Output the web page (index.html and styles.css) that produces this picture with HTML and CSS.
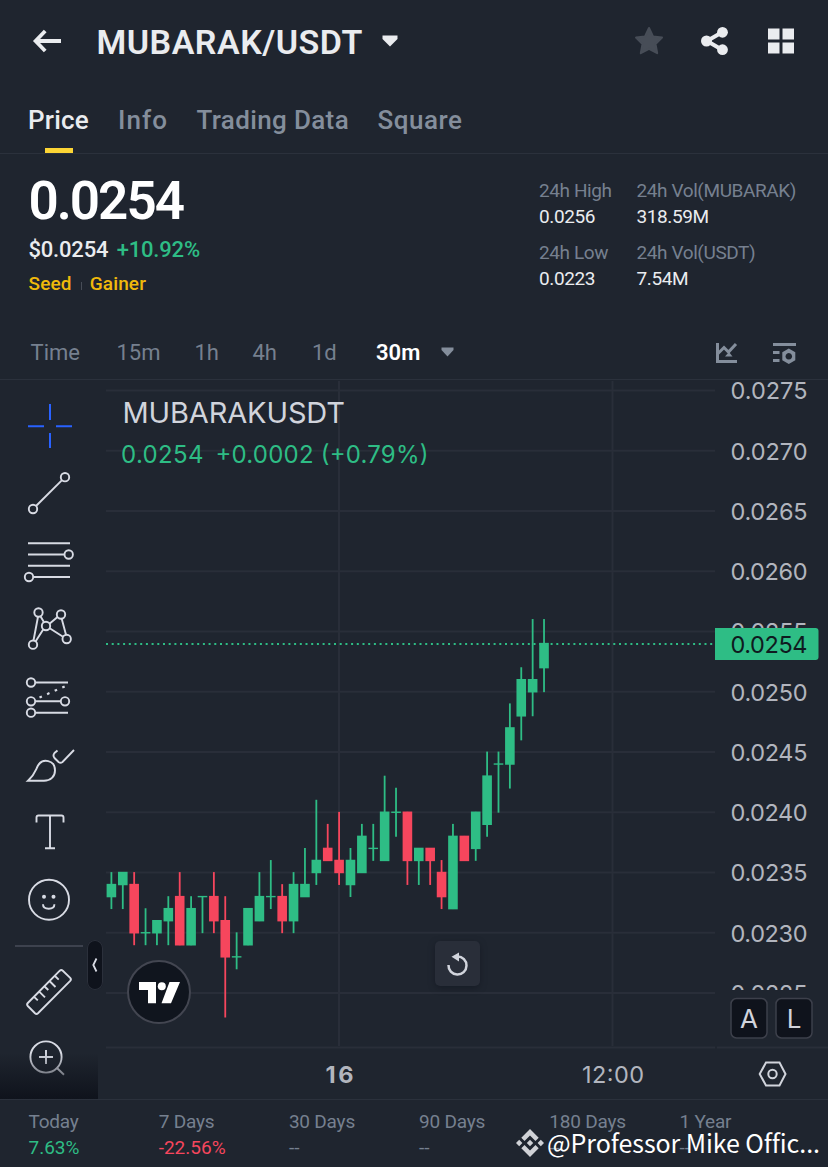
FILE: index.html
```html
<!DOCTYPE html>
<html lang="en">
<head>
<meta charset="utf-8">
<title>MUBARAK/USDT</title>
<link rel="stylesheet" href="styles.css">
</head>
<body>
<header class="header">
  <svg class="back" width="30" height="24" viewBox="0 0 30 24"><path d="M29 12H3M13.2 2L3.600 12l9.600 10" /></svg>
  <h1 class="title">MUBARAK/USDT</h1>
  <svg class="title-caret" width="16" height="12" viewBox="0 0 16 12"><path d="M0.500 0.500h15v3.500L8 11.500 0.500 4z"/></svg>
  <div class="actions">
    <svg width="30" height="30" viewBox="0 0 30 30"><path class="star" d="M15 2l4 8.400 9 1.200-6.500 6.400 1.700 9.200L15 22.800l-8.200 4.400 1.700-9.200L2 11.600l9-1.200z"/></svg>
    <svg width="30" height="30" viewBox="0 0 30 30"><path class="share-line" d="M22.500 6L7 15l15.500 9"/><g class="light"><circle cx="22.500" cy="6.300" r="5.400"/><circle cx="6.500" cy="15" r="5.500"/><circle cx="22.500" cy="23.700" r="5.400"/></g></svg>
    <svg width="30" height="30" viewBox="0 0 30 30"><path class="light" d="M2 2.500h11.500v11H2zM16.500 2.500H28v11H16.500zM2 16.500h11.500v11H2zM16.500 16.500H28v11H16.500z"/></svg>
  </div>
</header>
<nav class="tabs">
  <span class="tab tab-price active">Price</span>
  <span class="tab tab-info">Info</span>
  <span class="tab tab-data">Trading Data</span>
  <span class="tab tab-square">Square</span>
</nav>
<section class="summary">
  <div class="quote">
    <div class="last">0.0254</div>
    <div class="fiat"><span>$0.0254</span><span class="up">+10.92%</span></div>
    <div class="tags"><span>Seed</span><i></i><span>Gainer</span></div>
  </div>
  <dl class="stats">
    <div><dt>24h High</dt><dd>0.0256</dd></div>
    <div><dt>24h Vol(MUBARAK)</dt><dd>318.59M</dd></div>
    <div><dt>24h Low</dt><dd>0.0223</dd></div>
    <div><dt>24h Vol(USDT)</dt><dd>7.54M</dd></div>
  </dl>
</section>
<nav class="intervals">
  <span class="i-time">Time</span><span class="i-15">15m</span><span class="i-1h">1h</span><span class="i-4h">4h</span><span class="i-1d">1d</span><span class="i-30 active">30m</span>
  <svg class="int-caret" width="13" height="10" viewBox="0 0 13 10"><path d="M0.500 0.500h12v2.500l-6 6.500-6-6.500z"/></svg>
  <svg class="int-chart" width="22" height="22" viewBox="0 0 22 22"><path d="M1.500 1v18.500H21M2 11.500l6-6 4.500 4.500L20 2"/><path class="fill" d="M9 14.500l4-4.500 3.500 4.500z"/></svg>
  <svg class="int-set" width="24" height="24" viewBox="0 0 24 24"><path d="M1 3.500h23M1 11.500h6.500M1 19.500h6.500"/><path class="fill" fill-rule="evenodd" d="M16.800 7.500l6.500 3.800v8l-6.500 3.800-6.500-3.800v-8zM16.800 12a3.300 3.300 0 1 0 .01 0z"/></svg>
</nav>
<main class="workspace">
  <aside class="toolbar">
    <svg class="tool cross" viewBox="0 0 98 68"><path d="M50 13v16M50 42v15M28 35.300h16M56 35.300h16"/></svg>
    <svg class="tool" viewBox="0 0 98 68"><path d="M36 47L62 21.200"/><circle cx="65" cy="18.200" r="4.200"/><circle cx="33" cy="50" r="4.200"/></svg>
    <svg class="tool" viewBox="0 0 98 68"><path d="M28 16.200h42M28 27.500h36.500M28 38.700h42M33.300 50H70"/><circle cx="68.700" cy="27.500" r="4.200"/><circle cx="29" cy="50" r="4.200"/></svg>
    <svg class="tool" viewBox="0 0 98 68"><path d="M38 21.700L33.500 45.500M40.500 21.200L44 27.200M49.500 28.700L57.500 22M61.700 23.700L66 39.800M63 41.800L49.700 33.300M43.200 34.400L35.700 46.300"/><circle cx="38.500" cy="17.500" r="4.200"/><circle cx="61" cy="19.500" r="4.200"/><circle cx="46" cy="31" r="4.200"/><circle cx="33" cy="49.700" r="4.200"/><circle cx="66.700" cy="44" r="4.200"/></svg>
    <svg class="tool" viewBox="0 0 98 68"><path d="M35.200 19.500H68M35.200 38.300h25.600M35.200 49.700H68"/><path class="dots" d="M39.500 34.500L66 22.800"/><circle cx="31" cy="19.500" r="4.200"/><circle cx="31" cy="38.300" r="4.200"/><circle cx="65" cy="38.300" r="4.200"/><circle cx="31" cy="49.700" r="4.200"/></svg>
    <svg class="tool" viewBox="0 0 98 68"><path d="M28 49.800C34.500 44 35 40.500 38 34.500 42.500 27 55 28.500 55 39.500 55 45.500 50.500 49.800 44 49.800zM57.500 19.500l-3 2.500q-2 2.500 0 5l4 4q2 1.500 4 0L74 19"/></svg>
    <svg class="tool" viewBox="0 0 98 68"><path d="M36.500 23.500v-5q0-2 2-2h23q2 0 2 2v5M50 16.500v32.700M45 49.200h10"/></svg>
    <svg class="tool" viewBox="0 0 98 68"><circle cx="49" cy="32.700" r="20"/><path d="M43 37.300q0 4.500 5.700 4.500t5.700-4.500"/><circle class="dot" cx="44" cy="29.700" r="2"/><circle class="dot" cx="53.500" cy="29.700" r="2"/></svg>
    <hr class="sep">
    <svg class="tool" viewBox="0 0 98 68"><path d="M59.800 13.700q1.500-1.400 3 0l7.400 7.200q1.400 1.500 0 3L38 56.200q-1.500 1.400-3 0l-7.200-7.200q-1.400-1.500 0-3zM54.700 18.800l4 3.800M49.500 24l6 6M44.300 29.200l4 3.800M39 34.400l6 6M33.800 39.600l4 3.800"/></svg>
    <svg class="tool" viewBox="0 0 98 68"><circle cx="46" cy="32" r="15.600"/><path d="M39 32h14M46 25v14M57.200 43.200L64 49.700"/></svg>
    <div class="fade"></div>
    <svg class="collapse" width="16" height="50" viewBox="0 0 16 50"><path d="M9.500 18.500L6.300 25l3.200 6.500"/></svg>
  </aside>
  <svg class="chart" viewBox="98 381 730 718">
    <defs><clipPath id="axisClip"><path d="M715 381h113v609h-113z"/></clipPath></defs>
    <g id="grid" class="grid"><path d="M339 381v665M612.500 381v665M106 1047.500h609M717 1047.500h111"/></g>
    <g id="axis" class="axis" clip-path="url(#axisClip)"></g>
    <g id="candles"></g>
    <path class="last-line" d="M106 644h609"/>
    <path class="tag" d="M715 628h100.500q3 0 3 3v26q0 3-3 3H715z"/>
    <text class="tag-text" x="730.500" y="653" textLength="77">0.0254</text>
    <text class="symbol" x="122.500" y="422.500" textLength="222.500">MUBARAKUSDT</text>
    <text class="change" x="121" y="463" textLength="82.500">0.0254</text>
    <text class="change" x="215.500" y="463" textLength="213">+0.0002 (+0.79%)</text>
    <text class="time major" x="325.500" y="1082.500" textLength="28">16</text>
    <text class="time" x="582" y="1082.500" textLength="62">12:00</text>
    <path class="hex" d="M766 1062.500h13.500l6 11.500-6 11.500H766L759.700 1074z"/><circle class="hex" cx="772.500" cy="1074" r="4.200"/>
    <g class="key"><rect x="731" y="998.500" width="36" height="39.500" rx="5.500"/><rect x="776" y="998.500" width="36" height="39.500" rx="5.500"/><text x="749" y="1028" text-anchor="middle">A</text><text x="794" y="1028" text-anchor="middle">L</text></g>
    <circle class="tv" cx="159" cy="992" r="31"/>
    <g class="tv-mark"><path d="M139 982h17v21.300h-8V990h-9zM169.500 982H180l-9 21.300h-9.500z"/><circle cx="161.800" cy="986.300" r="4"/></g>
    <rect class="reset" x="435" y="941" width="45" height="45" rx="5"/>
    <path class="reset-arc" d="M448.500 965a9 9 0 1 0 9-8.500"/><path class="reset-head" d="M451.500 956.800l7.500-4.300v9z"/>
  </svg>
</main>
<footer class="periods">
  <div><span>Today</span><b class="up">7.63%</b></div>
  <div><span>7 Days</span><b class="down">-22.56%</b></div>
  <div><span>30 Days</span><b>--</b></div>
  <div><span>90 Days</span><b>--</b></div>
  <div><span>180 Days</span><b>--</b></div>
  <div><span>1 Year</span><b>--</b></div>
</footer>
<div class="watermark">
  <svg width="28" height="28" viewBox="0 0 28 28"><path d="M14 0l8.700 8.700-3.200 3.200L14 6.400l-5.500 5.500-3.200-3.200zM14 28l8.700-8.700-3.200-3.200-5.500 5.500-5.500-5.500-3.200 3.200zM3.200 10.800L6.400 14l-3.200 3.200L0 14zM24.800 10.800L28 14l-3.200 3.200-3.200-3.200zM14 10.800l3.200 3.200-3.200 3.200-3.200-3.200z"/></svg>
  <span>@Professor Mike Offic...</span>
</div>
<script src="script.js"></script>
</body>
</html>
```
FILE: styles.css
```css
* { box-sizing: border-box; }
body { margin: 0; width: 828px; height: 1167px; overflow: hidden; position: relative; display: flex; flex-direction: column; background: #1f252f; color: #eaecef; font-family: Roboto, "Noto Sans", sans-serif; }
svg { display: block; flex: none; }
.up { color: #2ebd85; }
.down { color: #f6465d; }
.light { fill: #eaecef; }

.header { height: 84px; display: flex; align-items: center; padding: 0 32px; }
.back { fill: none; stroke: #eaecef; stroke-width: 3.8; margin-top: -2px; }
.title { margin: -1px 0 0 34.500px; width: 285.500px; font-size: 34px; font-weight: 600; letter-spacing: 0.500px; line-height: 40px; white-space: nowrap; }
.title-caret { fill: #eaecef; margin-top: -3px; }
.actions { margin-left: auto; display: flex; gap: 36px; margin-top: -2px; }
.star { fill: #474d57; stroke: #474d57; stroke-width: 2; stroke-linejoin: round; }
.share-line { fill: none; stroke: #eaecef; stroke-width: 4; }

.tabs { height: 70px; display: flex; align-items: center; padding-left: 28px; border-bottom: 1px solid #2b313c; }
.tab { position: relative; height: 69px; line-height: 72px; font-size: 26px; font-weight: 500; color: #848e9c; white-space: nowrap; }
.tab.active { color: #eaecef; }
.tab.active::after { content: ""; position: absolute; left: 17px; bottom: 0; width: 28px; height: 5px; background: #fcd535; }
.tab-price { width: 90px; letter-spacing: 0.200px; }
.tab-info { width: 78.500px; letter-spacing: 1.100px; }
.tab-data { width: 181px; letter-spacing: 0.350px; }
.tab-square { letter-spacing: 0.500px; }

.summary { height: 172px; display: flex; justify-content: space-between; padding: 22px 26px 0 28.500px; }
.last { font-size: 53px; font-weight: 600; line-height: 50px; color: #fff; letter-spacing: -2px; }
.fiat { display: flex; gap: 8.500px; font-size: 22px; font-weight: 500; letter-spacing: -0.200px; line-height: 30px; margin-top: 9px; }
.tags { display: flex; align-items: center; font-size: 19px; font-weight: 500; letter-spacing: 0.150px; line-height: 26px; margin-top: 6px; color: #f0b90b; }
.tags i { width: 1px; height: 8px; background: #474d57; margin: 3px 8px 0 9px; }
.stats { margin: 2px 0 0; width: 263px; display: grid; grid-template-columns: 97.500px 1fr; grid-auto-rows: 62px; font-size: 19px; line-height: 26px; letter-spacing: -0.400px; white-space: nowrap; }
.stats dt { color: #76808f; }
.stats dd { margin: 0; }

.intervals { height: 54px; display: flex; align-items: center; padding-left: 30.500px; font-size: 22px; color: #76808f; border-bottom: 1px solid #2b313c; }
.intervals .active { color: #fff; font-weight: 600; }
.i-time { width: 86px; } .i-15 { width: 78px; } .i-1h { width: 58px; } .i-4h { width: 59.500px; } .i-1d { width: 64px; } .i-30 { width: 65px; }
.int-caret { fill: #848e9c; margin-top: -2px; }
.int-chart { margin-left: 261.500px; }
.int-set { margin-left: 34px; }
.int-chart, .int-set { fill: none; stroke: #848e9c; stroke-width: 3; }
.int-chart .fill, .int-set .fill { fill: #848e9c; stroke: none; }

.workspace { height: 719px; padding-top: 1px; display: flex; }
.toolbar { position: relative; width: 98px; padding-top: 10px; }
.tool { width: 98px; height: 68px; fill: none; stroke: #d8dbe4; stroke-width: 1.9; }
.tool .dot { fill: #d8dbe4; stroke: none; }
.tool .dots { stroke-width: 2.200; stroke-dasharray: 2.600 5.700; }
.cross { stroke: #2962ff; stroke-width: 2; }
.sep { margin: 10px 15px; width: 68px; height: 2px; border: 0; background: #3d424e; }
.fade { position: absolute; left: 0; bottom: 0; width: 98px; height: 46px; background: linear-gradient(#0f131c00, #0f131c); }
.collapse { position: absolute; left: 87px; top: 559px; background: #0f131c; border-radius: 8px; box-shadow: inset 0 0 0 1px #2b303b; fill: none; stroke: #d8dbe4; stroke-width: 1.8; }

.chart { width: 730px; height: 718px; font-family: Inter, sans-serif; font-size: 23.500px; }
.grid { stroke: #292e39; stroke-width: 2; }
.axis, .time { fill: #b2b5be; }
.major { font-weight: 700; }
.last-line { stroke: #2ebd85; stroke-width: 1.800; stroke-dasharray: 2 3.700; }
.tag { fill: #2ebd85; }
.tag-text { fill: #0f1a20; }
.symbol { fill: #d1d4dc; font-size: 29px; }
.change { fill: #2ebd85; font-size: 24px; }
.hex { fill: none; stroke: #d1d4dc; stroke-width: 2; }
.key rect { fill: #0f131c; stroke: #3d404b; stroke-width: 1.500; }
.key text { fill: #d1d4dc; font-size: 26px; }
.tv { fill: #10151e; stroke: #434651; stroke-width: 2; }
.tv-mark { fill: #fff; }
.reset { fill: #292e39; filter: drop-shadow(0 2px 3px #0f131c88); }
.reset-arc { fill: none; stroke: #d1d4dc; stroke-width: 2.500; }
.reset-head { fill: #d1d4dc; }
.bull { fill: #2ebd85; }
.bear { fill: #f6465d; }

.periods { height: 68px; border-top: 1px solid #2b313c; padding: 9px 0 0 28.500px; display: grid; grid-template-columns: repeat(6, 130.200px); font-size: 19px; line-height: 26px; letter-spacing: -0.200px; color: #76808f; }
.periods span, .periods b { display: block; font-weight: 400; white-space: nowrap; }
.periods b { letter-spacing: 0; }
.watermark { position: absolute; left: 516px; top: 1125px; display: flex; align-items: center; gap: 3px; font-family: "Noto Sans CJK SC", sans-serif; font-size: 25px; letter-spacing: -0.080px; line-height: 32px; height: 36px; color: #fff; white-space: nowrap; }
.watermark svg { fill: #d0d2d6; }
.watermark span { margin-top: -3px; }
```
FILE: script.js
```js
// Prices are in units of 0.0001; each row is [open, close, high, low].
const rows = [
  [233,234,235,232],[234,235,235,232],[234,230,235,229],[230,230,232,229],[230,231,231,229],
  [231,232,233,229],[233,229,235,229],[229,232,233,229],[233,233,233,230],[233,231,235,230],
  [231,228,233,223],[228,228,230,227],[229,232,232,229],[231,233,235,231],[233,233,236,232],
  [233,231,234,230],[231,234,235,230],[233,234,237,233],[235,236,241,234],[237,236,239,236],
  [236,235,240,234],[234,236,237,233],[235,238,239,235],[237,237,239,236],[236,240,243,236],
  [240,240,242,238],[240,236,240,234],[236,237,237,234],[237,236,237,234],[235,233,236,232],
  [232,238,239,232],[238,236,238,236],[237,240,240,236],[239,243,245,238],[244,244,245,240],
  [244,247,249,242],[248,251,252,246],[250,251,256,248],[252,254,256,250]
];
const NS = "http://www.w3.org/2000/svg";
const yOf = p => 390.5 + (275 - p) * 12.05;
const add = (id, name, attrs, text) => {
  const el = document.createElementNS(NS, name);
  for (const k in attrs) el.setAttribute(k, attrs[k]);
  if (text) el.textContent = text;
  document.getElementById(id).appendChild(el);
};
rows.forEach(([o, c, h, l], i) => {
  const x = 111.4 + i * 11.385;
  const cls = c >= o ? "bull" : "bear";
  const top = yOf(Math.max(o, c));
  add("candles", "rect", { class: cls, x: x - 0.9, y: yOf(h) - 0.4, width: 1.8, height: yOf(l) - yOf(h) + 0.8 });
  add("candles", "rect", { class: cls, x: x - 4.8, y: top - 0.7, width: 9.6, height: yOf(Math.min(o, c)) - top + 1.4 });
});
for (let p = 275; p >= 225; p -= 5) {
  const y = yOf(p);
  add("grid", "path", { d: `M106 ${y}H715` });
  add("axis", "text", { x: 730.5, y: y + 8.8, textLength: 77 }, "0.0" + p);
}
```
